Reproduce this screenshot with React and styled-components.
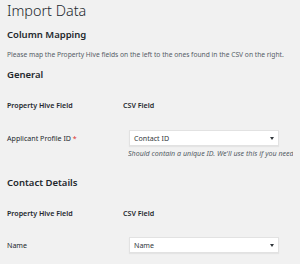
import React from 'react'
import styled, { createGlobalStyle } from 'styled-components'

const GlobalStyle = createGlobalStyle`
    body {
        margin: 0;
        background: #f1f1f1;
        font-family: "Noto Sans", "Open Sans", sans-serif;
        color: #23282d;
    }
`

const Wrap = styled.main`
    padding: 0 7px;
    width: 300px;
    height: 264px;
    box-sizing: border-box;
    overflow: hidden;
    background: #f1f1f1;
`

const Title = styled.h1`
    margin: 0;
    font-size: 14.4px;
    font-weight: 300;
    line-height: 22px;
    color: #23282d;
`

const Heading = styled.h2`
    margin: ${p => p.top || 0}px 0 0;
    font-size: 9.5px;
    font-weight: 600;
    line-height: 14px;
    color: #23282d;
`

const Desc = styled.p`
    margin: 8px 0 0;
    font-size: 6.7px;
    line-height: 10px;
    color: #555d66;
    white-space: nowrap;
`

const Row = styled.div`
    display: grid;
    grid-template-columns: 116px 1fr;
    align-items: center;
    margin-top: ${p => p.top}px;
    font-size: 7.1px;
    line-height: 10px;
    white-space: nowrap;
`

const HeadCell = styled.div`
    font-weight: 600;
    color: #23282d;
`

const Label = styled.div`
    color: #23282d;
`

const Req = styled.span`
    color: #dc3232;
`

const Select = styled.div`
    margin-left: 6px;
    width: 150px;
    height: 16px;
    box-sizing: border-box;
    display: flex;
    align-items: center;
    justify-content: space-between;
    padding: 0 4px;
    background: #fff;
    border: 1px solid #e2e2e2;
    box-shadow: 0 1px 1px rgba(0, 0, 0, 0.05);
    color: #32373c;
`

const Arrow = styled.span`
    width: 0;
    height: 0;
    border-left: 2px solid transparent;
    border-right: 2px solid transparent;
    border-top: 3px solid #32373c;
`

const Hint = styled.p`
    margin: 2px 0 0 121px;
    font-size: 7.1px;
    line-height: 10px;
    font-style: italic;
    color: #555d66;
    white-space: nowrap;
    overflow: hidden;
`

const App = () => {
    return <>
        <GlobalStyle />
        <Wrap>
            <Title>Import Data</Title>
            <Heading top={6}>Column Mapping</Heading>
            <Desc>Please map the Property Hive fields on the left to the ones found in the CSV on the right.</Desc>
            <Heading top={8}>General</Heading>
            <Row top={18}>
                <HeadCell>Property Hive Field</HeadCell>
                <HeadCell>CSV Field</HeadCell>
            </Row>
            <Row top={20}>
                <Label>Applicant Profile ID <Req>*</Req></Label>
                <Select>Contact ID<Arrow /></Select>
            </Row>
            <Hint>Should contain a unique ID. We'll use this if you need</Hint>
            <Heading top={18}>Contact Details</Heading>
            <Row top={18}>
                <HeadCell>Property Hive Field</HeadCell>
                <HeadCell>CSV Field</HeadCell>
            </Row>
            <Row top={19}>
                <Label>Name</Label>
                <Select>Name<Arrow /></Select>
            </Row>
        </Wrap>
    </>
}

export default App
